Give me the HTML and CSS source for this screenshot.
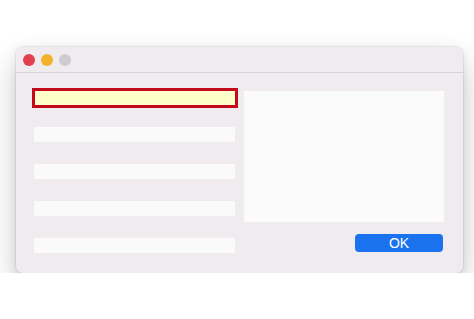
FILE: index.html
```html
<!DOCTYPE html>
<html>
<head>
<meta charset="utf-8">
<link rel="stylesheet" href="styles.css">
</head>
<body>
<div class="window">
  <div class="titlebar">
    <span class="light red"></span>
    <span class="light yellow"></span>
    <span class="light grey"></span>
  </div>
  <div class="content">
    <div class="left">
      <div class="focus"></div>
      <div class="field first"></div>
      <div class="field"></div>
      <div class="field"></div>
      <div class="field"></div>
    </div>
    <div class="right">
      <div class="panel"></div>
      <button class="ok">OK</button>
    </div>
  </div>
</div>
</body>
</html>
```
FILE: styles.css
```css
html, body {
  margin: 0;
  padding: 0;
  background: #ffffff;
  font-family: "Liberation Sans", Arial, sans-serif;
}
body {
  padding: 47px 0 0 16px;
}
.window {
  width: 447px;
  height: 226px;
  box-sizing: border-box;
  background: #efebee;
  border-radius: 7px;
  box-shadow: 0 14px 30px rgba(0, 0, 0, 0.22), 0 2px 8px rgba(0, 0, 0, 0.08), 0 0 0 1px rgba(0, 0, 0, 0.05);
  overflow: hidden;
}
.titlebar {
  height: 26px;
  box-sizing: border-box;
  border-bottom: 1px solid #d6d2d6;
  background: #efebef;
  display: flex;
  align-items: center;
  gap: 6px;
  padding-left: 7px;
}
.light {
  width: 12px;
  height: 12px;
  border-radius: 50%;
}
.red { background: #e2404e; }
.yellow { background: #f2b22b; }
.grey { background: #cfcbd0; }
.content {
  display: flex;
  gap: 6px;
  padding: 15px 0 0 16px;
}
.left {
  width: 206px;
  display: flex;
  flex-direction: column;
}
.focus {
  height: 20px;
  box-sizing: border-box;
  border: 3px solid #c20a1c;
  background: #fefec8;
}
.field {
  height: 15px;
  margin: 22px 3px 0 2px;
  background: #fbfafb;
}
.field.first {
  margin-top: 19px;
}
.right {
  width: 200px;
  display: flex;
  flex-direction: column;
  align-items: flex-end;
  padding-top: 3px;
}
.panel {
  width: 200px;
  height: 131px;
  background: #fcfbfc;
}
.ok {
  margin-top: 12px;
  margin-right: 1px;
  width: 88px;
  height: 18px;
  border: none;
  border-radius: 4px;
  background: #1b72ee;
  color: #ffffff;
  font-family: "Liberation Sans", Arial, sans-serif;
  font-size: 14px;
  padding: 0;
  line-height: 18px;
}
```
